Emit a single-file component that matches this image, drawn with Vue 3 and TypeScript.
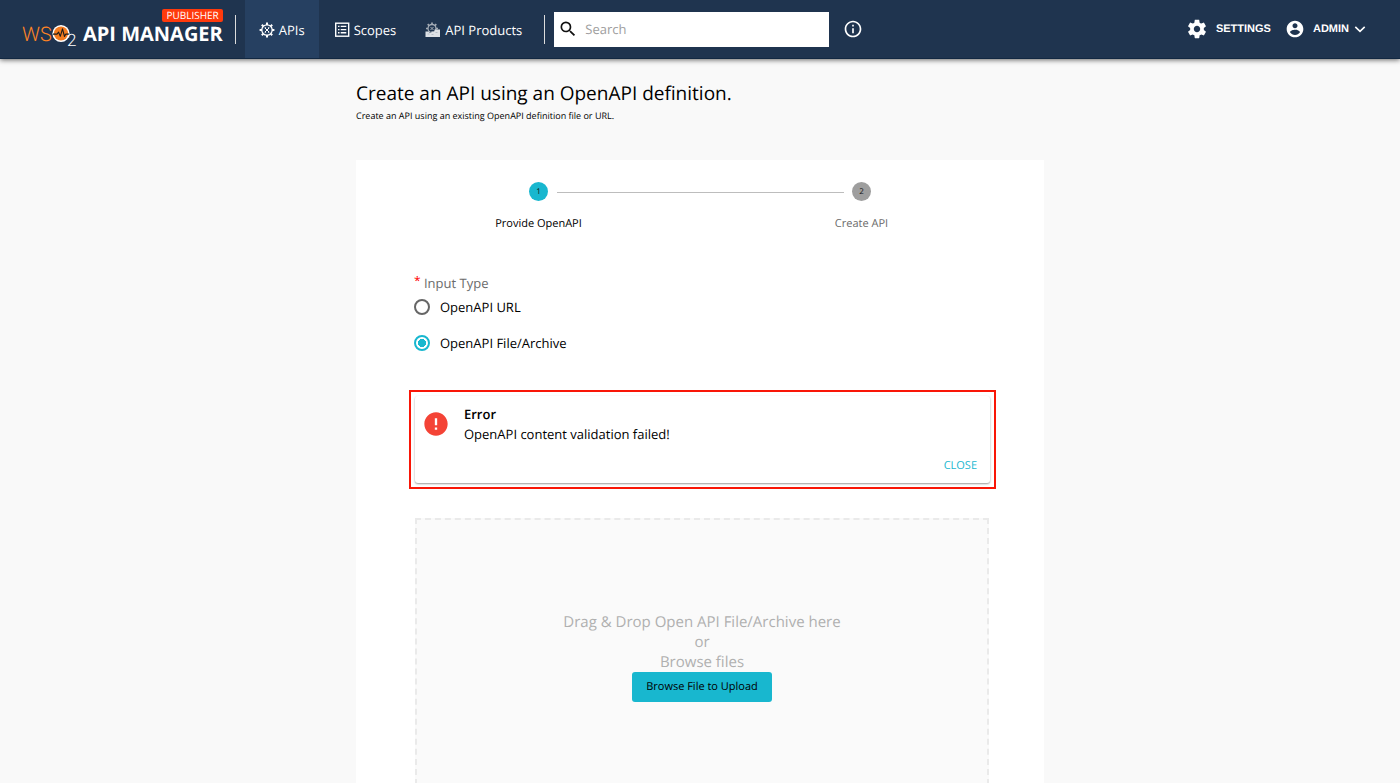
<script setup lang="ts">
import { ref } from 'vue'

type InputType = 'url' | 'file'

const inputType = ref<InputType>('file')
const query = ref('')
const showError = ref(true)
const picker = ref<HTMLInputElement | null>(null)

const steps = [
  { id: 1, label: 'Provide OpenAPI', active: true },
  { id: 2, label: 'Create API', active: false },
]

const options: { value: InputType; label: string }[] = [
  { value: 'url', label: 'OpenAPI URL' },
  { value: 'file', label: 'OpenAPI File/Archive' },
]

function browse() {
  picker.value?.click()
}
</script>

<template>
  <div class="page">
    <header class="topbar">
      <a class="brand" href="#" aria-label="WSO2 API Manager Publisher">
        <span class="badge">PUBLISHER</span>
        <span class="brand-row">
          <svg class="logo" viewBox="0 0 56 24" width="56" height="24" aria-hidden="true">
            <text class="logo-ws" x="0" y="19">WS</text>
            <circle cx="39" cy="11.500" r="8.6" fill="#fff" />
            <circle cx="39" cy="11.500" r="7.1" fill="#f47b20" />
            <path d="M31 12.1h4l1.6-2 1.7 4.2 2.2-7.4 2 7.6 1.3-2.4h3.4" fill="none" stroke="#1b1b1b" stroke-width="1.1" stroke-linejoin="round" />
            <text class="logo-two" x="45" y="24">2</text>
          </svg>
          <span class="brand-name">API MANAGER</span>
        </span>
      </a>
      <span class="rule"></span>
      <nav class="nav">
        <a class="nav-item current" href="#">
          <svg viewBox="0 0 16 16" width="16" height="16" fill="none" stroke="#fff" aria-hidden="true">
            <circle cx="8" cy="8" r="5.2" stroke-width="1.3" />
            <path d="M8 .6V3M8 13v2.4M.6 8H3M13 8h2.400M2.800 2.800l1.600 1.600M11.600 11.600l1.600 1.600M13.200 2.800l-1.600 1.600M4.400 11.600l-1.600 1.600" stroke-width="2" />
            <path d="M6 6l4 4M10 6l-4 4" stroke-width="1" />
            <path d="M5.700 5.700h1.200M9.100 5.700h1.200M5.700 10.300h1.200M9.100 10.300h1.200" stroke-width="1" />
          </svg>
          APIs
        </a>
        <a class="nav-item" href="#">
          <svg viewBox="0 0 16 16" width="16" height="16" aria-hidden="true">
            <rect x="1.700" y="1.200" width="13" height="13" fill="none" stroke="#fff" stroke-width="1.400" />
            <path d="M4 3.700h1.500v1.400H4zM4 6.900h1.500v1.400H4zM4 10.100h1.500v1.400H4zM6.700 3.700h5.600v1.400H6.700zM6.700 6.900h5.600v1.400H6.700zM6.700 10.100h5.600v1.400H6.700z" fill="#fff" />
          </svg>
          Scopes
        </a>
        <a class="nav-item" href="#">
          <svg viewBox="0 0 16 16" width="16" height="16" aria-hidden="true">
            <g fill="none" stroke="#a3abb5">
              <circle cx="7" cy="6.500" r="4" stroke-width="1.300" />
              <path d="M7 .5v2M1 6.500h2M11 6.500h2M2.700 2.200l1.500 1.500M11.300 2.200L9.800 3.700" stroke-width="1.700" />
              <path d="M5.500 5l3 3M8.500 5l-3 3" />
            </g>
            <path d="M.5 9.500h4V11h2V9.500h3V7.500H15V15H.5z" fill="#dde1e6" />
            <path d="M2.500 12h2M6.500 12.500h2M10.500 10.500h2" stroke="#b4bcc6" />
          </svg>
          API Products
        </a>
      </nav>
      <span class="rule"></span>
      <div class="search" role="search">
        <svg viewBox="0 0 24 24" width="20" height="20" fill="#111" aria-hidden="true">
          <path d="M15.500 14h-.79l-.28-.27A6.471 6.471 0 0 0 16 9.500 6.500 6.500 0 1 0 9.500 16c1.610 0 3.090-.59 4.230-1.570l.27.28v.79l5 4.990L20.490 19l-4.990-5zm-6 0C7.010 14 5 11.990 5 9.500S7.010 5 9.500 5 14 7.010 14 9.500 11.990 14 9.500 14z" />
        </svg>
        <input v-model="query" type="text" placeholder="Search" aria-label="Search" />
      </div>
      <button class="icon-btn" type="button" aria-label="Search help">
        <svg viewBox="0 0 24 24" width="20" height="20" fill="#fff" aria-hidden="true">
          <path d="M11 17h2v-6h-2v6zm1-15C6.480 2 2 6.480 2 12s4.480 10 10 10 10-4.480 10-10S17.520 2 12 2zm0 18c-4.410 0-8-3.590-8-8s3.590-8 8-8 8 3.590 8 8-3.590 8-8 8zM11 9h2V7h-2v2z" />
        </svg>
      </button>
      <div class="account">
        <button class="account-btn" type="button">
          <svg viewBox="0 0 24 24" width="22" height="22" fill="#fff" aria-hidden="true">
            <path d="M19.430 12.980c.04-.32.07-.64.07-.98s-.03-.66-.07-.98l2.110-1.650c.19-.15.24-.42.12-.64l-2-3.460c-.12-.22-.39-.3-.61-.22l-2.490 1c-.52-.4-1.080-.73-1.690-.98l-.38-2.650C14.460 2.180 14.250 2 14 2h-4c-.25 0-.46.18-.49.42l-.38 2.650c-.61.25-1.170.59-1.690.98l-2.490-1c-.23-.09-.49 0-.61.22l-2 3.460c-.13.22-.07.49.12.64l2.110 1.650c-.04.32-.07.65-.07.98s.03.66.07.98l-2.110 1.650c-.19.15-.24.42-.12.64l2 3.460c.12.22.39.3.61.22l2.490-1c.52.4 1.080.73 1.690.98l.38 2.650c.03.24.24.42.49.42h4c.25 0 .46-.18.49-.42l.38-2.650c.61-.25 1.170-.59 1.690-.98l2.490 1c.23.09.49 0 .61-.22l2-3.460c.12-.22.07-.49-.12-.64l-2.110-1.650zM12 15.500c-1.930 0-3.500-1.570-3.500-3.500s1.570-3.500 3.500-3.500 3.500 1.570 3.500 3.500-1.570 3.500-3.500 3.500z" />
          </svg>
          SETTINGS
        </button>
        <button class="account-btn" type="button">
          <svg viewBox="0 0 24 24" width="20" height="20" fill="#fff" aria-hidden="true">
            <path d="M12 2C6.480 2 2 6.480 2 12s4.480 10 10 10 10-4.480 10-10S17.520 2 12 2zm0 3c1.660 0 3 1.340 3 3s-1.340 3-3 3-3-1.340-3-3 1.340-3 3-3zm0 14.200c-2.500 0-4.710-1.280-6-3.220.03-1.990 4-3.080 6-3.080 1.990 0 5.970 1.090 6 3.080-1.290 1.940-3.500 3.220-6 3.220z" />
          </svg>
          <span class="with-caret">
            ADMIN
            <svg viewBox="0 0 12 12" width="12" height="12" fill="none" stroke="#fff" stroke-width="1.600" aria-hidden="true">
              <path d="M1.300 3.800L6 8.300l4.700-4.500" />
            </svg>
          </span>
        </button>
      </div>
    </header>

    <main class="content">
      <h1>Create an API using an OpenAPI definition.</h1>
      <p class="subtitle">Create an API using an existing OpenAPI definition file or URL.</p>

      <section class="card">
        <ol class="stepper">
          <li v-for="step in steps" :key="step.id" class="step" :class="{ active: step.active }">
            <span class="dot">{{ step.id }}</span>
            <span class="step-label">{{ step.label }}</span>
          </li>
        </ol>

        <form class="form" @submit.prevent>
          <fieldset class="choices">
            <legend><span class="required">*</span> Input Type</legend>
            <label v-for="option in options" :key="option.value" class="choice">
              <input v-model="inputType" type="radio" name="inputType" :value="option.value" />
              {{ option.label }}
            </label>
          </fieldset>

          <div v-if="showError" class="highlight">
            <div class="alert" role="alert">
              <svg viewBox="0 0 24 24" width="28" height="28" fill="#f44336" aria-hidden="true">
                <path d="M12 2C6.480 2 2 6.480 2 12s4.480 10 10 10 10-4.480 10-10S17.520 2 12 2zm1 15h-2v-2h2v2zm0-4h-2V7h2v6z" />
              </svg>
              <div class="alert-text">
                <strong>Error</strong>
                <span>OpenAPI content validation failed!</span>
              </div>
              <button class="close" type="button" @click="showError = false">CLOSE</button>
            </div>
          </div>

          <div class="dropzone">
            <p>Drag &amp; Drop Open API File/Archive here</p>
            <p>or</p>
            <p>Browse files</p>
            <button class="browse" type="button" @click="browse">Browse File to Upload</button>
            <input ref="picker" type="file" hidden aria-label="OpenAPI file or archive" />
          </div>
        </form>
      </section>
    </main>
  </div>
</template>

<style>
body {
  margin: 0;
  background: #f9f9f9;
}
</style>

<style scoped>
.page {
  font-family: "Open Sans", "Noto Sans", sans-serif;
  color: #000;
  font-size: 13px;
  line-height: 20px;
  text-rendering: geometricPrecision;
}

button {
  font: inherit;
  text-rendering: inherit;
  border: 0;
  background: none;
  padding: 0;
  cursor: pointer;
}

a {
  text-decoration: none;
}

svg {
  display: block;
  flex: none;
}

.topbar {
  display: flex;
  align-items: center;
  height: 59px;
  padding: 0 34px 0 22px;
  background: #1f344f;
  border-bottom: 1px solid #122842;
  box-sizing: border-box;
  box-shadow: 0 1px 5px rgba(0, 0, 0, 0.6);
  color: #fff;
}

.brand {
  display: flex;
  flex-direction: column;
  align-items: flex-end;
  color: #fff;
  margin-right: 12px;
  padding-bottom: 3px;
}

.badge {
  background: #ff3a0c;
  border-radius: 2px;
  padding: 0 4px;
  font-size: 10px;
  line-height: 13px;
}

.brand-row {
  display: flex;
  align-items: center;
  gap: 5px;
}

.logo {
  overflow: visible;
}

.logo-ws {
  font-family: Roboto, sans-serif;
  font-weight: 300;
  font-size: 20px;
  fill: #ff8424;
}

.logo-two {
  font-family: Roboto, sans-serif;
  font-weight: 300;
  font-size: 17px;
  fill: #fff;
}

.brand-name {
  font-size: 20px;
  font-weight: 700;
  line-height: 22px;
}

.rule {
  width: 1px;
  height: 29px;
  background: #dcdcdc;
}

.nav {
  display: flex;
  align-self: stretch;
  gap: 1px;
  margin: 0 8px 0 9px;
}

.nav-item {
  display: flex;
  align-items: center;
  gap: 4px;
  padding: 1px 14px 0;
  color: #fff;
}

.nav-item.current {
  background: #264061;
}

.search {
  display: flex;
  align-items: center;
  gap: 7px;
  width: 275px;
  height: 35px;
  margin: 0 14px 0 9px;
  padding: 0 4px;
  box-sizing: border-box;
  background: #fff;
}

.search input {
  flex: 1;
  min-width: 0;
  border: 0;
  outline: 0;
  padding: 0;
  font: inherit;
  text-rendering: inherit;
  color: #111;
  background: none;
}

.search input::placeholder {
  color: #9e9e9e;
  opacity: 1;
}

.account {
  display: flex;
  gap: 14px;
  margin-left: auto;
}

.account-btn {
  display: flex;
  align-items: center;
  gap: 8px;
  color: #fff;
  font-family: "Liberation Sans", Arial, sans-serif;
  font-size: 11px;
  font-weight: 700;
}

.with-caret {
  display: flex;
  align-items: center;
  gap: 5px;
}

.content {
  max-width: 688px;
  margin: 0 auto;
  padding-top: 20px;
}

h1 {
  margin: 0;
  font-size: 19px;
  font-weight: 400;
  line-height: 28px;
}

.subtitle {
  margin: 0;
  font-size: 9px;
  line-height: 18px;
}

.card {
  margin-top: 35px;
  padding: 22px 21px 32px;
  background: #fff;
}

.stepper {
  display: flex;
  margin: 0;
  padding: 0;
  list-style: none;
}

.step {
  position: relative;
  flex: 1;
  display: flex;
  flex-direction: column;
  align-items: center;
  gap: 13px;
  font-size: 11px;
  color: #6b6b6b;
}

.step.active {
  color: #000;
}

.step + .step::before {
  content: "";
  position: absolute;
  top: 10px;
  left: calc(-50% + 18px);
  right: calc(50% + 18px);
  height: 1px;
  background: #bdbdbd;
}

.dot {
  width: 19px;
  height: 19px;
  border-radius: 50%;
  background: #9e9e9e;
  color: #111;
  font-size: 8px;
  line-height: 19px;
  text-align: center;
}

.active .dot {
  background: #18b7cf;
}

.form {
  margin: 37px 34px 0 38px;
}

.choices {
  margin: 0 0 0 -1px;
  padding: 0;
  border: 0;
}

legend {
  padding: 0;
  color: #6b6b6b;
}

.required {
  color: #f00;
  font-size: 12px;
  vertical-align: 3px;
}

.choice {
  display: flex;
  align-items: center;
  gap: 10px;
  height: 36px;
}

.choice:first-of-type {
  margin-top: -4px;
}

.choice input {
  appearance: none;
  width: 16px;
  height: 16px;
  margin: 0;
  border: 2px solid #666;
  border-radius: 50%;
  box-sizing: border-box;
}

.choice input:checked {
  border-color: #18b7cf;
  background: radial-gradient(circle, #18b7cf 4px, transparent 4px);
}

.highlight {
  margin: 29px -7px 0 -6px;
  padding: 4px;
  border: 2px solid #f91607;
}

.alert {
  display: flex;
  align-items: flex-start;
  min-height: 87px;
  padding: 8px 13px 7px 7px;
  box-sizing: border-box;
  border-radius: 3px;
  box-shadow: 0 1px 2px rgba(0, 0, 0, 0.4);
}

.alert svg {
  margin-top: 6px;
}

.alert-text {
  flex: 1;
  display: flex;
  flex-direction: column;
  margin-left: 14px;
}

.alert strong {
  font-weight: 600;
}

.close {
  align-self: flex-end;
  color: #18b7cf;
  font-size: 11px;
}

.dropzone {
  display: flex;
  flex-direction: column;
  align-items: center;
  justify-content: center;
  min-height: 277px;
  margin-top: 29px;
  box-sizing: border-box;
  border: 2px dashed #eaeaea;
  background: #fafafa;
  color: #b0b0b0;
  font-size: 15px;
}

.dropzone p {
  margin: 0;
}

.browse {
  padding: 5px 14px;
  border-radius: 3px;
  background: #18b7cf;
  color: #000;
  font-size: 11px;
}
</style>
